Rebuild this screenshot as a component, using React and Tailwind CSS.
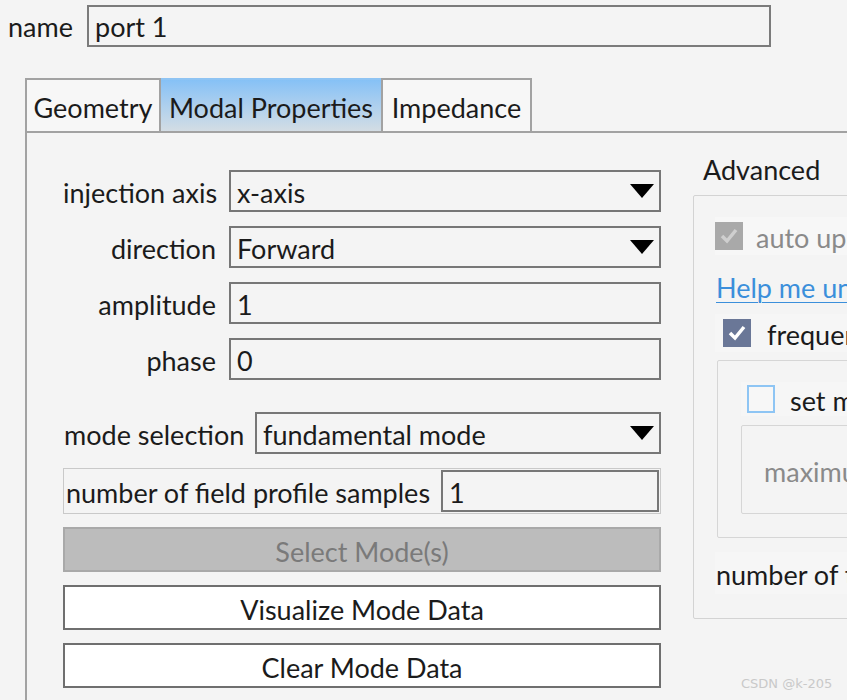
import React from "react";

function Arrow() {
  return (
    <svg width="24" height="14" viewBox="0 0 24 14" className="shrink-0">
      <polygon points="0,0 24,0 12,14" fill="#000" />
    </svg>
  );
}

function Combo({ value, w }) {
  return (
    <div className={`${w} h-[42px] border-2 border-[#777] flex items-center justify-between pl-[6px] pr-[5px]`}>
      <span className="pt-[3px]">{value}</span>
      <Arrow />
    </div>
  );
}

function Field({ value, w }) {
  return (
    <div className={`${w} h-[42px] border-2 border-[#777] flex items-center pl-[6px] pt-[3px]`}>
      <span>{value}</span>
    </div>
  );
}

function Row({ label, children }) {
  return (
    <div className="flex items-center">
      <div className="w-[153px] text-right pt-[3px] whitespace-nowrap">{label}</div>
      <div className="ml-[13px]">{children}</div>
    </div>
  );
}

function Check({ kind }) {
  if (kind === "disabled") {
    return (
      <div className="w-[28px] h-[28px] bg-[#a9a9a9] flex items-center justify-center shrink-0">
        <svg width="20" height="18" viewBox="0 0 20 18">
          <path d="M3 9 L8 14 L17 3" stroke="#cfcfcf" strokeWidth="3.5" fill="none" />
        </svg>
      </div>
    );
  }
  if (kind === "checked") {
    return (
      <div className="w-[28px] h-[28px] bg-[#6a7797] flex items-center justify-center shrink-0">
        <svg width="20" height="18" viewBox="0 0 20 18">
          <path d="M3 9 L8 14 L17 3" stroke="#fff" strokeWidth="3.5" fill="none" />
        </svg>
      </div>
    );
  }
  return <div className="w-[28px] h-[28px] border-2 border-[#8ec5f4] bg-[#f7f7f7] shrink-0" />;
}

export default function App() {
  return (
    <div className="relative w-[847px] h-[700px] overflow-hidden bg-[#f4f4f4] text-[#1b1b1b] text-[27px] leading-[31px] [font-family:Lato,'Noto_Sans',sans-serif]">
      {/* name */}
      <div className="flex items-center pt-[5px] pl-[8px]">
        <div className="w-[79px] pt-[1px]">name</div>
        <div className="w-[684px] h-[42px] border-2 border-[#7b7b7b] flex items-center pl-[6px] pt-[1px]">port 1</div>
      </div>

      {/* tabs */}
      <div className="ml-[25px] mt-[31px]">
        <div className="flex h-[55px]">
          <div className="w-[136px] border-2 border-[#a2a2a2] bg-[#f7f7f7] flex items-center justify-center pt-[3px]">Geometry</div>
          <div className="w-[220px] border-y-2 border-[#a2a2a2] border-t-[#8fc4f3] bg-gradient-to-b from-[#86c1f6] to-[#d3dde4] flex items-center justify-center pt-[3px] whitespace-nowrap">
            Modal Properties
          </div>
          <div className="w-[151px] border-2 border-[#a2a2a2] bg-[#f7f7f7] flex items-center justify-center pt-[3px]">Impedance</div>
        </div>

        <div className="flex border-l-2 border-[#a2a2a2] -mt-[2px] border-t-2 h-[600px]">
          {/* left column */}
          <div className="w-[598px] ml-[36px] pt-[37px] flex flex-col shrink-0">
            <div className="flex flex-col gap-[14px]">
              <Row label="injection axis"><Combo value="x-axis" w="w-[432px]" /></Row>
              <Row label="direction"><Combo value="Forward" w="w-[432px]" /></Row>
              <Row label="amplitude"><Field value="1" w="w-[432px]" /></Row>
              <Row label="phase"><Field value="0" w="w-[432px]" /></Row>
            </div>

            <div className="flex items-center justify-between mt-[32px] pl-[1px]">
              <span className="pt-[3px] whitespace-nowrap">mode selection</span>
              <Combo value="fundamental mode" w="w-[406px]" />
            </div>

            <div className="mt-[14px] h-[46px] border border-[#c9c9c9] flex items-center justify-between pl-[2px] pr-[1px]">
              <span className="pt-[3px] whitespace-nowrap">number of field profile samples</span>
              <Field value="1" w="w-[218px]" />
            </div>

            <div className="mt-[13px] h-[45px] border-2 border-[#a9a9a9] bg-[#bcbcbc] text-[#7a7a7a] flex items-center justify-center pt-[3px]">
              Select Mode(s)
            </div>
            <div className="mt-[13px] h-[45px] border-2 border-[#6f6f6f] bg-white flex items-center justify-center pt-[3px]">
              Visualize Mode Data
            </div>
            <div className="mt-[13px] h-[45px] border-2 border-[#6f6f6f] bg-white flex items-center justify-center pt-[3px]">
              Clear Mode Data
            </div>
          </div>

          {/* right column */}
          <div className="ml-[32px] pt-[21px] flex flex-col shrink-0 w-[260px]">
            <div className="pl-[10px] h-[41px]">Advanced</div>
            <div className="h-[424px] border border-[#d3d3d3] rounded-[2px] pl-[21px] pt-[21px] flex flex-col whitespace-nowrap">
              <div className="h-[38px] bg-[#f7f7f7] flex items-center text-[#8a8a8a]">
                <Check kind="disabled" />
                <span className="ml-[13px] pt-[3px]">auto update</span>
              </div>
              <div className="mt-[12px] h-[38px] flex items-center text-[#3b8fdb] underline underline-offset-[4px] decoration-1 pl-[1px] pt-[3px]">
                Help me understand
              </div>
              <div className="mt-[9px] h-[38px] flex items-center pl-[8px] bg-[#f6f6f6]">
                <Check kind="checked" />
                <span className="ml-[16px] pt-[3px]">frequency dependent profile</span>
              </div>
              <div className="mt-[8px] ml-[2px] h-[178px] border border-[#d6d6d6] rounded-[2px] pl-[23px] pt-[21px] flex flex-col">
                <div className="h-[34px] flex items-center pl-[6px] bg-[#f6f6f6]">
                  <Check kind="empty" />
                  <span className="ml-[15px] pt-[3px]">set maximum modes</span>
                </div>
                <div className="mt-[9px] h-[89px] border border-[#d6d6d6] rounded-[2px] flex items-center pl-[22px] pt-[3px] text-[#8a8a8a]">
                  maximum number of modes
                </div>
              </div>
              <div className="mt-[14px] h-[42px] flex items-center pl-[1px] pt-[3px] bg-[#f6f6f6]">number of test frequency points</div>
            </div>
          </div>
        </div>
      </div>

      <div className="absolute left-[741px] top-[676px] text-[13px] leading-[16px] text-[#c9c9c9] [font-family:'DejaVu_Sans',sans-serif]">
        CSDN @k-205
      </div>
    </div>
  );
}
